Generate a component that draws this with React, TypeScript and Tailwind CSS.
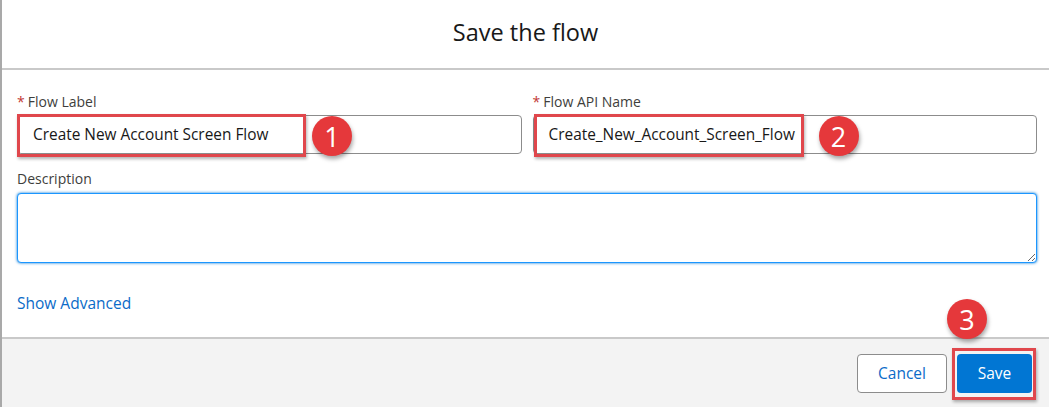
import React from "react";

const FONT = { fontFamily: '"Open Sans", "Noto Sans", Arial, sans-serif' };

function Badge({ n }: { n: number }) {
  return (
    <div className="flex h-[40px] w-[40px] items-center justify-center rounded-full bg-[#e5383b] text-[27px] leading-none text-white shadow-[1px_3px_4px_rgba(0,0,0,0.35)]">
      {n}
    </div>
  );
}

function Field({
  label,
  value,
  boxWidth,
  badgeLeft,
  n,
  boxLeft,
}: {
  label: string;
  value: string;
  boxWidth: number;
  badgeLeft: number;
  n: number;
  boxLeft: number;
}) {
  return (
    <div>
      <div className="mb-[4px] flex h-[20px] items-center text-[14px] text-[#3e3e3c]">
        <span className="mr-[3px] text-[#c23934]">*</span>
        {label}
      </div>
      <div className="relative">
        <div className="flex h-[39px] items-center rounded-[4px] border border-[#8c8c8c] bg-white pl-[15px] text-[15.4px] text-[#181818]">
          {value}
        </div>
        {/* annotation box */}
        <div
          className="absolute top-[-1px] h-[43px] border-[3px] border-[#e0474c] shadow-[1px_2px_3px_rgba(0,0,0,0.3)]"
          style={{ width: boxWidth, left: boxLeft }}
        />
        <div className="absolute top-[1px]" style={{ left: badgeLeft }}>
          <Badge n={n} />
        </div>
      </div>
    </div>
  );
}

export default function App() {
  return (
    <div
      className="flex h-[407px] w-[1049px] flex-col overflow-hidden border-l-2 border-[#a9a9a9] bg-white"
      style={FONT}
    >
      {/* Header */}
      <div className="flex h-[70px] shrink-0 items-center justify-center border-b-2 border-[#c9c9c9] pb-[2px]">
        <h2 className="text-[23.5px] text-[#181818]">Save the flow</h2>
      </div>

      {/* Body */}
      <div className="relative h-[267px] shrink-0 pl-[15px] pr-[12px] pt-[21px]">
        <div className="grid grid-cols-2 gap-x-[11px]">
          <Field
            label="Flow Label"
            value="Create New Account Screen Flow"
            boxLeft={0}
            boxWidth={289}
            badgeLeft={295}
            n={1}
          />
          <Field
            label="Flow API Name"
            value="Create_New_Account_Screen_Flow"
            boxLeft={1}
            boxWidth={270}
            badgeLeft={286}
            n={2}
          />
        </div>

        <div className="mt-[14px] mb-[5px] flex h-[20px] items-center text-[14px] text-[#3e3e3c]">
          Description
        </div>
        <textarea
          className="block h-[70px] w-full resize-y rounded-[4px] border border-[#1b96ff] bg-white shadow-[0_0_3px_#0176d3] outline-none"
          defaultValue=""
        />

        <div className="mt-[31px] flex h-[20px] items-center text-[15.5px] text-[#0b6bc8]">
          Show Advanced
        </div>

        <div className="absolute left-[945px] top-[229px]">
          <Badge n={3} />
        </div>
      </div>

      {/* Footer */}
      <div className="flex flex-1 justify-end gap-[10px] border-t-2 border-[#c9c9c9] bg-[#f3f3f3] pr-[17px] pt-[15px]">
        <button className="h-[39px] w-[90px] rounded-[4px] border border-[#8c8c8c] bg-white text-[15.5px] text-[#0b6bc8]">
          Cancel
        </button>
        <div className="relative">
          <button className="h-[39px] w-[75px] rounded-[4px] bg-[#0176d3] text-[15.5px] text-white">
            Save
          </button>
          <div className="absolute left-[-5px] top-[-6px] h-[52px] w-[84px] border-[3px] border-[#e0474c] shadow-[1px_2px_3px_rgba(0,0,0,0.3)]" />
        </div>
      </div>
    </div>
  );
}
